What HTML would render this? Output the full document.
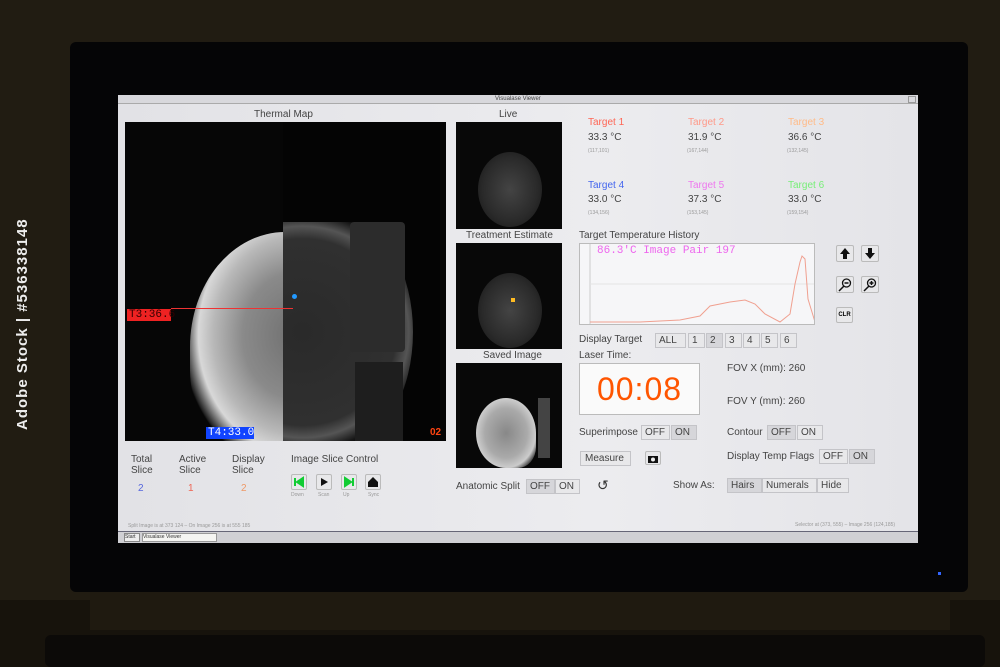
<!DOCTYPE html><html><head><style>
*{margin:0;padding:0;box-sizing:border-box}
body{width:1000px;height:667px;overflow:hidden;background:#211c12;font-family:"Liberation Sans",sans-serif;position:relative}
.a{position:absolute}
.t{position:absolute;font-size:10px;color:#444;white-space:nowrap}
.btn{position:absolute;background:#d6d6da;border:1px solid #c4c4c8;font-size:10px;color:#444;line-height:13px;padding-left:3px}
.on{background:#e8e8ea}
.img{position:absolute;background:#080808;overflow:hidden}
.ib{position:absolute;width:16px;height:16px;background:#e8e8ea;border:1px solid #bbb;border-radius:2px}
.sm{position:absolute;font-size:5px;color:#999}
</style></head><body>
<div class="a" style="left:0;top:600px;width:1000px;height:67px;background:#17130c"></div>
<div class="a" style="left:90px;top:590px;width:860px;height:40px;background:#1f1a10"></div>
<div class="a" style="left:45px;top:635px;width:940px;height:32px;background:#0c0a08;border-radius:6px"></div>
<div class="a" style="left:70px;top:42px;width:898px;height:550px;background:#050506;border-radius:6px"></div>
<div class="a" style="left:938px;top:572px;width:3px;height:3px;background:#36f"></div>
<div class="a" style="left:14px;top:430px;transform:rotate(-90deg);transform-origin:0 0;color:#eee;font-size:15px;letter-spacing:1px;font-weight:bold;white-space:nowrap;width:0">Adobe Stock | #536338148</div>
<div class="a" style="left:118px;top:95px;width:800px;height:448px;background:linear-gradient(90deg,#e2e2e6,#ececef 60%,#e4e4e8)"></div>
<div class="a" style="left:118px;top:95px;width:800px;height:9px;background:#d8d8dc;border-bottom:1px solid #aaa"></div>
<div class="t" style="left:495px;top:96px;font-size:6px">Visualase Viewer</div>
<div class="a" style="left:908px;top:96px;width:8px;height:7px;border:1px solid #999"></div>
<div class="t" style="left:254px;top:109px;font-size:10px">Thermal Map</div>
<div class="t" style="left:499px;top:109px">Live</div>
<div class="t" style="left:466px;top:230px">Treatment Estimate</div>
<div class="t" style="left:483px;top:350px">Saved Image</div>
<!-- thermal map -->
<div class="img" style="left:125px;top:122px;width:321px;height:319px;background:#060606">
 <div class="a" style="left:65px;top:110px;width:190px;height:230px;border-radius:50% 50% 20% 40%;background:radial-gradient(ellipse at 55% 45%,#707070,#8a8a8a 35%,#b8b8b8 55%,#d8d8d8 65%,#222 75%,transparent 76%)"></div>
 <div class="a" style="left:158px;top:0;width:163px;height:319px;background:#040404"></div>
 <div class="a" style="left:158px;top:100px;width:130px;height:220px;border-radius:0 50% 50% 0;background:radial-gradient(ellipse at 15% 50%,#2a2a2a,#303030 60%,#555 68%,#181818 76%,#040404 80%)"></div>
 <div class="a" style="left:225px;top:100px;width:55px;height:130px;background:#2c2c2c;border-radius:4px"></div>
 <div class="a" style="left:230px;top:240px;width:48px;height:80px;background:#1e1e1e"></div>
 <div class="a" style="left:2px;top:187px;width:44px;height:12px;background:#e22;color:#300;font:11px 'Liberation Mono',monospace;padding-left:2px">T3:36.6</div>
 <div class="a" style="left:46px;top:186px;width:122px;height:1px;background:#e33"></div>
 <div class="a" style="left:81px;top:305px;width:48px;height:12px;background:#14f;color:#fff;font:11px 'Liberation Mono',monospace;padding-left:2px">T4:33.0</div>
 <div class="a" style="left:305px;top:305px;color:#f41;font-size:10px;font-weight:bold">02</div>
 <div class="a" style="left:167px;top:172px;width:5px;height:5px;background:#29f;border-radius:50%"></div>
</div>
<!-- thumbs -->
<div class="img" style="left:456px;top:122px;width:106px;height:107px"><div class="a" style="left:22px;top:30px;width:64px;height:75px;border-radius:50%;background:radial-gradient(#444,#2a2a2a 60%,#111)"></div></div>
<div class="img" style="left:456px;top:243px;width:106px;height:106px"><div class="a" style="left:22px;top:30px;width:64px;height:75px;border-radius:50%;background:radial-gradient(#444,#2a2a2a 60%,#111)"></div><div class="a" style="left:55px;top:55px;width:4px;height:4px;background:#fb2"></div></div>
<div class="img" style="left:456px;top:363px;width:106px;height:105px"><div class="a" style="left:20px;top:35px;width:60px;height:70px;border-radius:50% 50% 30% 50%;background:radial-gradient(#888,#aaa 50%,#ccc 70%,#222 85%)"></div><div class="a" style="left:82px;top:35px;width:12px;height:60px;background:#444"></div></div>
<!-- slices -->
<div class="t" style="left:131px;top:454px;line-height:11px">Total<br>Slice</div>
<div class="t" style="left:179px;top:454px;line-height:11px">Active<br>Slice</div>
<div class="t" style="left:232px;top:454px;line-height:11px">Display<br>Slice</div>
<div class="t" style="left:138px;top:483px;color:#56d">2</div>
<div class="t" style="left:188px;top:483px;color:#e65">1</div>
<div class="t" style="left:241px;top:483px;color:#e96">2</div>
<div class="t" style="left:291px;top:454px">Image Slice Control</div>
<div class="ib" style="left:291px;top:474px"><svg width="14" height="14"><path d="M3 3v8M11 3L5 7l6 4z" stroke="#1c3" fill="#1c3" stroke-width="2"/></svg></div>
<div class="ib" style="left:316px;top:474px"><svg width="14" height="14"><path d="M4 3l7 4-7 4z" fill="#111"/></svg></div>
<div class="ib" style="left:341px;top:474px"><svg width="14" height="14"><path d="M3 3l6 4-6 4zM11 3v8" stroke="#1c3" fill="#1c3" stroke-width="2"/></svg></div>
<div class="ib" style="left:365px;top:474px"><svg width="14" height="14"><path d="M2 7l5-5 5 5v5H2z" fill="#111"/></svg></div>
<div class="sm" style="left:291px;top:492px">Down</div><div class="sm" style="left:318px;top:492px">Scan</div><div class="sm" style="left:343px;top:492px">Up</div><div class="sm" style="left:368px;top:492px">Sync</div>
<div class="t" style="left:456px;top:481px">Anatomic Split</div>
<div class="btn" style="left:526px;top:479px;width:29px">OFF</div><div class="btn on" style="left:555px;top:479px;width:25px">ON</div>
<div class="t" style="left:597px;top:477px;font-size:14px;color:#333">↺</div>
<!-- targets -->
<div class="t" style="left:588px;top:117px;color:#f65">Target 1</div><div class="t" style="left:588px;top:132px">33.3 °C</div><div class="sm" style="left:588px;top:148px">(117,101)</div>
<div class="t" style="left:688px;top:117px;color:#f98">Target 2</div><div class="t" style="left:688px;top:132px">31.9 °C</div><div class="sm" style="left:687px;top:148px">(167,144)</div>
<div class="t" style="left:788px;top:117px;color:#fb8">Target 3</div><div class="t" style="left:788px;top:132px">36.6 °C</div><div class="sm" style="left:787px;top:148px">(132,145)</div>
<div class="t" style="left:588px;top:180px;color:#46e">Target 4</div><div class="t" style="left:588px;top:194px">33.0 °C</div><div class="sm" style="left:588px;top:210px">(134,156)</div>
<div class="t" style="left:688px;top:180px;color:#e7e">Target 5</div><div class="t" style="left:688px;top:194px">37.3 °C</div><div class="sm" style="left:687px;top:210px">(153,145)</div>
<div class="t" style="left:788px;top:180px;color:#7e7">Target 6</div><div class="t" style="left:788px;top:194px">33.0 °C</div><div class="sm" style="left:787px;top:210px">(159,154)</div>
<div class="t" style="left:579px;top:230px">Target Temperature History</div>
<div class="a" style="left:579px;top:243px;width:236px;height:82px;background:#f6f6f8;border:1px solid #bbb">
<svg width="234" height="80" style="position:absolute;left:0;top:0"><line x1="10" y1="0" x2="10" y2="80" stroke="#ccc"/><line x1="10" y1="40" x2="234" y2="40" stroke="#e4e4e4"/>
<path d="M10 78L60 78 100 76 120 72 130 62 150 58 165 56 175 60 185 70 200 78 210 70 215 40 220 18 222 12 225 15 228 55 235 78" fill="none" stroke="#f0a090"/></svg>
<div class="a" style="left:17px;top:1px;color:#e6e;font:11px 'Liberation Mono',monospace">86.3'C Image Pair 197</div></div>
<div class="ib" style="left:836px;top:245px;width:18px;height:17px"><svg width="16" height="15"><path d="M8 2L3 8h3v5h4V8h3z" fill="#111"/></svg></div>
<div class="ib" style="left:861px;top:245px;width:18px;height:17px"><svg width="16" height="15"><path d="M8 13L3 7h3V2h4v5h3z" fill="#111"/></svg></div>
<div class="ib" style="left:836px;top:276px;width:18px;height:17px"><svg width="16" height="15"><circle cx="9.5" cy="6" r="4" fill="none" stroke="#111" stroke-width="1.3"/><path d="M7 9l-5 5M7.5 6h4" stroke="#111" stroke-width="1.5"/></svg></div>
<div class="ib" style="left:861px;top:276px;width:18px;height:17px"><svg width="16" height="15"><circle cx="9.5" cy="6" r="4" fill="none" stroke="#111" stroke-width="1.3"/><path d="M7 9l-5 5M7.5 6h4M9.5 4v4" stroke="#111" stroke-width="1.5"/></svg></div>
<div class="ib" style="left:836px;top:307px;width:17px;height:16px;font-size:6px;text-align:center;line-height:14px;font-weight:bold">CLR</div>
<div class="t" style="left:579px;top:334px">Display Target</div>
<div class="btn on" style="left:655px;top:333px;width:31px">ALL</div>
<div class="btn on" style="left:688px;top:333px;width:17px">1</div>
<div class="btn" style="left:706px;top:333px;width:17px">2</div>
<div class="btn on" style="left:725px;top:333px;width:17px">3</div>
<div class="btn on" style="left:743px;top:333px;width:17px">4</div>
<div class="btn on" style="left:761px;top:333px;width:17px">5</div>
<div class="btn on" style="left:780px;top:333px;width:17px">6</div>
<div class="t" style="left:579px;top:350px">Laser Time:</div>
<div class="a" style="left:579px;top:363px;width:121px;height:52px;background:#fafafa;border:1px solid #bbb;color:#f50;font-size:32px;text-align:center;line-height:50px;letter-spacing:1px">00:08</div>
<div class="t" style="left:727px;top:363px">FOV X (mm): 260</div>
<div class="t" style="left:727px;top:396px">FOV Y (mm): 260</div>
<div class="t" style="left:579px;top:427px">Superimpose</div>
<div class="btn on" style="left:641px;top:425px;width:29px">OFF</div><div class="btn" style="left:671px;top:425px;width:26px">ON</div>
<div class="t" style="left:727px;top:427px">Contour</div>
<div class="btn" style="left:767px;top:425px;width:29px">OFF</div><div class="btn on" style="left:797px;top:425px;width:26px">ON</div>
<div class="btn on" style="left:580px;top:451px;width:51px;padding-left:4px">Measure</div>
<div class="ib" style="left:645px;top:451px;width:16px;height:14px"><svg width="14" height="12"><rect x="2" y="3" width="10" height="7" fill="#111"/><circle cx="7" cy="6.5" r="2" fill="#eee"/></svg></div>
<div class="t" style="left:727px;top:451px">Display Temp Flags</div>
<div class="btn on" style="left:819px;top:449px;width:29px">OFF</div><div class="btn" style="left:849px;top:449px;width:26px">ON</div>
<div class="t" style="left:673px;top:480px">Show As:</div>
<div class="btn" style="left:727px;top:478px;width:35px">Hairs</div>
<div class="btn on" style="left:762px;top:478px;width:55px">Numerals</div>
<div class="btn on" style="left:817px;top:478px;width:32px">Hide</div>
<div class="sm" style="left:128px;top:523px">Split Image is at 373 124 – On Image 256 is at 555 185</div>
<div class="sm" style="left:795px;top:522px">Selector at (373, 555) – Image 256 (124,185)</div>
<div class="a" style="left:118px;top:531px;width:800px;height:12px;background:#d0d0d4;border-top:1px solid #667"></div>
<div class="a" style="left:124px;top:533px;width:16px;height:9px;border:1px solid #888;font-size:5px;color:#333;background:#eee">Start</div>
<div class="a" style="left:142px;top:533px;width:75px;height:9px;background:#f5f5f2;font-size:5px;color:#333;border:1px solid #999">Visualase Viewer</div>
</body></html>
